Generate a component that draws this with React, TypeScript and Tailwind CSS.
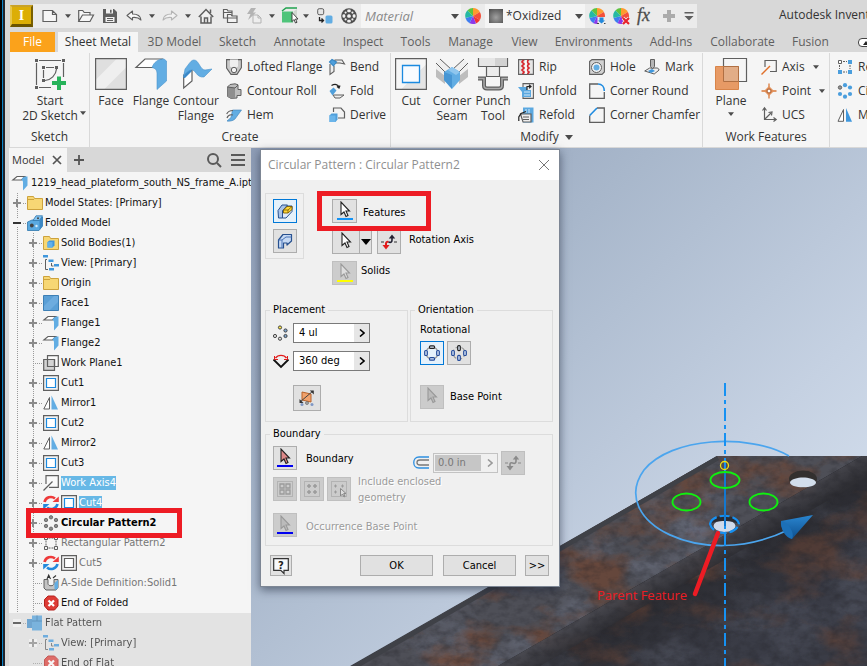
import React from "react";

const G = "#5f5f5f";
const B = "#62ade3";

const wheelSlices = (
  <g>
    <path d="M8 8V0a8 8 0 0 1 6.900 4z" fill="#ff9a2e" />
    <path d="M8 8 14.900 4a8 8 0 0 1 0 8z" fill="#f4503a" />
    <path d="m8 8 6.900 4A8 8 0 0 1 11 15.400z" fill="#f5322f" />
    <path d="m8 8 3 7.400a8 8 0 0 1-6.500-.2z" fill="#8a39ea" />
    <path d="m8 8-3.500 7.200A8 8 0 0 1 .5 10z" fill="#3e7df0" />
    <path d="M8 8 .5 10A8 8 0 0 1 2.500 2.300z" fill="#25b9a4" />
    <path d="M8 8 2.500 2.300A8 8 0 0 1 8 0z" fill="#5dc33f" />
  </g>
);

/* 16 x 16 drawings */
const small: Record<string, React.ReactNode> = {
  newFile: <path d="M1 2.500h9.500l4 4v7H1z M10.500 2.500v4h4" fill="#f6f6f6" stroke={G} strokeWidth="1.200" />,
  open: <path d="M.7 13.500V2.500h4l1.500 2H12V7M.7 13.500 4.500 7H15.500L12 13.500z" fill="#f6f6f6" stroke={G} strokeWidth="1.200" />,
  save: (
    <g>
      <path d="M1 1h11l3 3v11H1z" fill={G} />
      <path d="M4 1h7v4.500H4z" fill="#f0f0f0" />
      <path d="M8 1.800h1.600v3H8z" fill={G} />
      <path d="M3.500 9h9v5h-9z" fill="#f0f0f0" />
      <path d="M5 10.500h6M5 12.500h6" stroke={G} />
    </g>
  ),
  undo: <path d="M6.500 3 1 7.500 6.500 12V9.500C10 9 12.500 9.500 15 12c-.5-4-4-6-8.500-6z" fill="#fafafa" stroke={G} strokeWidth="1.100" strokeLinejoin="round" />,
  redo: <path d="M9.500 3 15 7.500 9.500 12V9.500C6 9 3.500 9.500 1 12c.5-4 4-6 8.500-6z" fill="#f2f2f2" stroke="#b5b5b5" strokeWidth="1.100" strokeLinejoin="round" />,
  home: (
    <g fill="none" stroke={G} strokeWidth="1.500">
      <path d="M.8 9 8 1.500 15.200 9M12.500 5V1.500M3 8.500V15h10V8.500" fill="#f2f2f2" />
      <path d="M6.500 15v-5h3v5" />
    </g>
  ),
  folders: (
    <g fill="#f2f2f2" stroke={G} strokeWidth="1.200">
      <path d="M1.500 1.500h3.500l1 1.500h4v7H1.500z" />
      <path d="M5.500 6.500h3.500l1 1.500h5v6.500H5.500z" />
      <path d="M1.500 4.500H10M5.500 10H15" />
    </g>
  ),
  bolt: (
    <g>
      <path d="M5 0h5L7 4.500h3L2 12l2.500-6H1z" fill="#b3b3b3" />
      <path d="M7 7h5l3 3v5H7z M12 7v3h3" fill="#eee" stroke="#b3b3b3" />
    </g>
  ),
  selectCube: (
    <g>
      <path d="M0 3.500h11v11H0z" fill="#4fc47a" />
      <path d="M0 3 4 0h11" stroke="#21a34f" strokeWidth="1.500" fill="none" />
      <path d="M11.500 3.500 15 1v10l-3.500 3z" fill="#cfd6cf" />
      <path d="M10 4.500v9l2-2 1.500 3.500 1.500-.7-1.500-3.300H16z" fill="#fff" stroke="#333" strokeWidth=".9" />
    </g>
  ),
  swap: (
    <g>
      <rect x=".7" y=".7" width="6" height="6" rx="1.500" fill="#e6e6e6" stroke={G} />
      <rect x="8.500" y="7.500" width="7" height="8" rx="1.500" fill={B} />
      <path d="M2.500 9v3.500H6M4.500 10.500l2 2-2 2" fill="none" stroke="#222" strokeWidth="1.300" />
    </g>
  ),
  ball: (
    <g>
      <circle cx="8" cy="8" r="7.800" fill="#4e4e4e" />
      <g fill="#f1f1f1">
        <rect x="6.200" y="6.200" width="3.600" height="3.600" rx="1.500" />
        <rect x="1.500" y="6.200" width="2.800" height="3.600" rx="1.200" />
        <rect x="11.700" y="6.200" width="2.800" height="3.600" rx="1.200" />
        <rect x="6.200" y="1.500" width="3.600" height="2.800" rx="1.200" />
        <rect x="6.200" y="11.700" width="3.600" height="2.800" rx="1.200" />
        <circle cx="4.600" cy="4.600" r="1.100" />
        <circle cx="11.400" cy="4.600" r="1.100" />
        <circle cx="4.600" cy="11.400" r="1.100" />
        <circle cx="11.400" cy="11.400" r="1.100" />
      </g>
    </g>
  ),
  wheel: wheelSlices,
  wheelAdjust: (
    <g>
      {wheelSlices}
      <path d="M8.500 9H16v7H8.500z" fill="#ebebeb" />
      <path d="M10.500 9.500h4v3H16l-3.500 3-3.500-3h1.500z" fill="#2389dc" />
      <path d="M8 15.500h2M15 15.500h1.500" stroke="#444" />
    </g>
  ),
  wheelClear: (
    <g>
      {wheelSlices}
      <path d="m10 10 6 6M16 10l-6 6" stroke="#f3f3f3" strokeWidth="3.600" />
      <path d="m10 10 6 6M16 10l-6 6" stroke="#e8232b" strokeWidth="2.200" />
    </g>
  ),
  fx: (
    <text x="0" y="13" fontFamily="'Liberation Serif', serif" fontStyle="italic" fontSize="18" fill="#4c4c4c" stroke="#4c4c4c" strokeWidth=".3">
      fx
    </text>
  ),
  plusGray: <path d="M6 2h4v4h4v4h-4v4H6v-4H2V6h4z" fill="#ababab" />,
  more: <path d="M3.500 4h9v1.500h-9zM3.500 8h9L8 12.500z" fill={G} />,
  lofted: (
    <g>
      <path d="M.6.600h14.800v8L11 15.400H5L.6 9z" fill="#c9c9c9" stroke={G} strokeWidth="1.100" />
      <path d="M4 .6v7l4 2 4-2v-7z" fill="#efefef" />
      <circle cx="8" cy="11" r="2.700" fill="#f3f3f3" stroke={G} />
    </g>
  ),
  roll: (
    <g>
      <path d="M1.500 4 4 1.500 9 .8l3 1v4.700h3v6H11V15l-6 .4-3.500-2z" fill="#bdbdbd" stroke={G} />
      <path d="M1.500 4 9 5v10l-4 .4-3.500-2z" fill="#8f8f8f" />
      <path d="M1.500 4 9 5l3-3" fill="none" stroke={G} />
    </g>
  ),
  hem: (
    <g>
      <path d="M6.500 3h9L9 12c-2 2-6 2.500-8 2l4-3.500z" fill={B} stroke="#3f82b8" strokeWidth=".6" />
      <path d="M.7 7C2 4 5 3.500 7 3.500M1 11c1-3 4-3.500 6-3" fill="none" stroke={G} strokeWidth="1.200" />
    </g>
  ),
  bend: (
    <g fill="none" stroke={G} strokeWidth="1.100">
      <path d="M6 1h7l2.500 4L11 4H5z" fill="#eee" />
      <path d="M1 5v10.500l4-3V7" fill="#eee" />
      <path d="M.5 3 3 .5 7.500 3 4.500 7z" fill="#4f9fdb" stroke="#3988c4" />
    </g>
  ),
  fold: (
    <g>
      <path d="M4 12h11l-4 3H6z" fill="#eee" stroke={G} />
      <path d="m.5 8 4-3.500 3 3-4 5z" fill="#4f9fdb" />
      <path d="M2.500 2.500C6 .5 9 1.500 10 4M8 3.500l2 1.500 1-2.500" fill="none" stroke="#222" strokeWidth="1.200" />
    </g>
  ),
  derive: (
    <g>
      <path d="M4.500 5V1h7.500l3.500 4v6H9" fill="#f3f3f3" stroke={G} strokeWidth="1.200" />
      <path d="m.5 8.500 2-2h6v6l-2 2.500h-6z" fill="#4f9fdb" />
      <path d="M.5 8.500h6v6.500h-6z" fill="#6bb5ea" />
    </g>
  ),
  rip: (
    <g>
      <path d="M.6.600h14.800v14.800H.6z" fill="#e6e6e6" stroke={G} strokeWidth="1.100" />
      <path d="M5.500 1 4 3l2 2-2 2 2 2-2 2 2 2-1.500 2M10.500 1 9 3l2 2-2 2 2 2-2 2 2 2-1.500 2" fill="none" stroke="#d8242b" strokeWidth="1.700" />
      <path d="M7.200 1h1.600v14H7.200z" fill="#fff" />
    </g>
  ),
  unfold: (
    <g>
      <path d="M5 .600h10.400v14.800H5z" fill="#eee" stroke={G} strokeWidth="1.100" />
      <path d="M0 4h9v3h4v7H4V9z" fill="#5ba8e0" />
      <path d="M6 9h6M6 12h6" stroke="#d4e9f8" />
      <path d="M9 7V3.500h3.500M11 1.800l2 1.700-2 1.700" fill="none" stroke="#222" strokeWidth="1.200" />
    </g>
  ),
  refold: (
    <g>
      <path d="M5 .5h10.500v15H5z" fill="#5ba8e0" />
      <path d="M7 3h6M7 5h6" stroke="#d4e9f8" strokeDasharray="2 1" />
      <path d="M2.500 7H13v8H5z" fill="#eee" stroke={G} strokeWidth="1.200" />
      <path d="M5 10h6M5 12.500h6" stroke={G} />
      <path d="M8 4.500 3 6.500.8 10v4" fill="none" stroke="#222" strokeWidth="1.200" />
    </g>
  ),
  hole: (
    <g>
      <path d="M.6 2.500 3 .6h12.400V13L13 15.400H.6z" fill="#d2d2d2" stroke={G} strokeWidth="1.100" />
      <circle cx="7.500" cy="8.500" r="5" fill="#f5f5f5" stroke={G} />
      <circle cx="7.500" cy="8.500" r="3" fill="#63ade2" />
    </g>
  ),
  cornerRound: (
    <g fill="none" strokeWidth="1.300">
      <path d="M9 1H.7v14.300h14.600V9" stroke={G} />
      <path d="M9 1c4 0 6.300 3 6.300 7" stroke="#1e8be0" strokeWidth="1.600" />
    </g>
  ),
  chamfer: (
    <g fill="none" strokeWidth="1.300">
      <path d="M8 1h7.300v14.300H.7V8.500" stroke={G} />
      <path d="M.7 8.500 8 1" stroke="#1e8be0" strokeWidth="1.600" />
    </g>
  ),
  mark: (
    <g>
      <path d="m.7 12 5-3h8l1.500 2-5 4z" fill="#eee" stroke={G} />
      <path d="m4 12 4-2 3 2-4 2z" fill="#3f97dd" />
      <path d="M6.500.5h4v7L8.500 10l-2-2.500z" fill="#b5b5b5" stroke={G} />
    </g>
  ),
  axis: (
    <g fill="none">
      <path d="M4 8V1.500h11.300v11H9" stroke={G} strokeWidth="1.200" />
      <path d="M.5 15.500 9 7" stroke="#e0702a" strokeWidth="1.400" />
    </g>
  ),
  point: (
    <g>
      <path d="M8 .5v15M.5 8h15" stroke="#d9793a" strokeWidth="1.300" />
      <path d="m8 3 5 5-5 5-5-5z" fill="#e2925c" />
      <circle cx="8" cy="8" r="2" fill="#fff" stroke="#a8582a" />
    </g>
  ),
  ucs: (
    <g fill="none" stroke={G} strokeWidth="1.200">
      <path d="M3.500 1v11.500H15M3.500 12.500 10 6" />
      <path d="M1.500 3.500 3.500.8l2 2.700M12.500 10.500l2.700 2-2.700 2M7.500 5.500l3.500-.5-.5 3.500" />
    </g>
  ),
  rectPattern: (
    <g>
      <path d="M6 2.500h4M2.500 6v4M6 13h4M13 6v4" stroke={G} strokeDasharray="2 1" />
      <path d="M1.500 1.500h3v3h-3z" fill="#fff" stroke={G} />
      <path d="M11 1h4v4h-4zM1 11h4v4H1zM11 11h4v4h-4z" fill="#4a9edd" />
    </g>
  ),
  circPattern: (
    <g fill="#4a9edd">
      <circle cx="3" cy="4.500" r="1.700" fill="#999" stroke={G} />
      <circle cx="8" cy="2.200" r="2.100" />
      <circle cx="13" cy="4.500" r="2.100" />
      <circle cx="13" cy="11" r="2.100" />
      <circle cx="8" cy="13.700" r="2.100" />
      <circle cx="3" cy="11" r="2.100" />
    </g>
  ),
  mirrorBlue: (
    <g>
      <path d="M6.500 2.500v11.800H1z" fill="#fff" stroke={G} />
      <path d="M9 1v13.800h6z" fill="#3f97dd" />
    </g>
  ),
  /* browser tree */
  part: (
    <g>
      <path d="M5 1.500h8L9.500 5H.8z" fill="#fff" stroke={G} strokeWidth="1.100" />
      <path d="M9.500 5C10 2.500 12 1 15.500 1.500v9L11 15.500V7.500C11 6 10.500 5.500 9.500 5z" fill={B} />
    </g>
  ),
  folder: (
    <g>
      <path d="M.5 14.500v-13h6l1 2h8v11z" fill="#f7d774" stroke="#cda23c" />
      <path d="M1 4.500h6" stroke="#cda23c" />
    </g>
  ),
  folded: (
    <g>
      <path d="M.5 7 5 5h7.500l3-3v9L12 15.500H.5z" fill="#5aa9e0" stroke="#2f77ad" strokeWidth=".8" />
      <path d="M6 5.500 9 .8h6.500L12.500 5.500z" fill="#84c3ef" stroke="#2f77ad" strokeWidth=".8" />
      <path d="M12.500 5.500V15l3-4V1z" fill="#3b87c4" />
      <circle cx="4.800" cy="10.500" r="1.900" fill="#444" />
      <circle cx="11" cy="3.200" r="1" fill="#444" />
      <circle cx="9.500" cy="11" r="1.200" fill="#d8ecfa" />
    </g>
  ),
  bodies: (
    <g>
      <path d="M.5 14.500v-13h6l1 2h8v11z" fill="#f7d774" stroke="#cda23c" />
      <path d="m4.500 7 2-1.500h5v5l-2 2h-5z" fill="#3f97dd" />
      <path d="M4.500 7h5v5.500h-5z" fill="#63b1ea" />
    </g>
  ),
  view: (
    <g>
      <path d="M0 0h5v2.500H0zM5.500 4.500h5V7h-5zM11 9h5v2.500h-5zM6 13h5v2.500H6z" fill="#3f97dd" />
      <path d="M4 4.500H2.500v10H5M8.500 8v3h2" fill="none" stroke={G} />
    </g>
  ),
  face: (
    <g>
      <path d="M.5.500h15v15H.5z" fill="#5a9fd6" stroke="#3d7fb5" />
      <path d="M11 1h4v6L7 15H1v-4z" fill="#79b6e4" opacity=".6" />
    </g>
  ),
  workPlane: (
    <g fill="none" stroke={G} strokeWidth="1.200">
      <path d="M4.500.700h10.800v10.800H4.500z" fill="#fafafa" />
      <path d="M.7 4.500h10.800v10.800H.7z" fill="#cfcfcf" fillOpacity=".9" />
      <path d="M4.500 4.500h7v7h-7z" />
    </g>
  ),
  cut: (
    <g>
      <path d="M.6.600h14.800v14.800H.6z" fill="#f3f3f3" stroke={G} strokeWidth="1.200" />
      <path d="M3.500 3.500h9v9h-9z" fill="#fff" stroke="#1b8ae0" strokeWidth="1.200" />
    </g>
  ),
  cutGray: (
    <g>
      <path d="M.6.600h14.800v14.800H.6z" fill="#f3f3f3" stroke={G} strokeWidth="1.200" />
      <path d="M3.500 3.500h9v9h-9z" fill="#fff" stroke={G} strokeWidth="1.200" />
    </g>
  ),
  mirror: (
    <g>
      <path d="M6.500 2.500V14H.8z" fill="#fff" stroke={G} />
      <path d="M8.500.500V14.500H15z" fill={B} />
    </g>
  ),
  workAxis: (
    <g fill="none" stroke={G} strokeWidth="1.200">
      <path d="M3 9V.7h12.300v11.600H6" fill="#fafafa" />
      <path d="M.5 15.500 9.500 6.500" />
    </g>
  ),
  refresh: (
    <g fill="none" strokeWidth="2.600">
      <path d="M1.500 7a6.500 6.500 0 0 1 10.500-3.500" stroke="#ee3a3a" />
      <path d="M14.500 9A6.500 6.500 0 0 1 4 12.500" stroke="#2389dc" />
      <path d="M15.800 1.500V7H9.500z" fill="#ee3a3a" />
      <path d="M.2 14.500V9H6.500z" fill="#2389dc" />
    </g>
  ),
  circGray: (
    <g fill="#8a8a8a" stroke={G} strokeWidth=".8">
      <circle cx="8" cy="2.300" r="1.700" />
      <circle cx="13" cy="5" r="1.700" />
      <circle cx="13" cy="11" r="1.700" />
      <circle cx="8" cy="13.700" r="1.700" />
      <circle cx="3" cy="11" r="1.700" />
      <circle cx="3" cy="5" r="1.700" />
    </g>
  ),
  rectGray: (
    <g fill="none" stroke={G}>
      <path d="M5.500 3h5M3 5.500v5M5.500 13h5M13 5.500v5" strokeDasharray="2 1" />
      <path d="M1.500 1.500h3v3h-3zM11.500 1.500h3v3h-3zM1.500 11.500h3v3h-3zM11.500 11.500h3v3h-3z" />
    </g>
  ),
  aSide: (
    <g>
      <path d="M1 4.500h4v4c0 3 6 3 6 0v-4h4v8L13 15H3l-2-2z" fill="#c3c3c3" stroke={G} />
      <path d="M11.500 13.500V8L15 5v8l-2 2z" fill={B} />
      <path d="m4 4 1.700-4L7.500 4M4.600 2.500h2.200M10 3l3-2.500" fill="none" stroke="#333" strokeWidth="1.100" />
    </g>
  ),
  end: (
    <g>
      <path d="M5 1h6.500L15 4.500V11l-3.500 4H5L1.500 11V4.500z" fill="#dd3b35" stroke="#b5211c" />
      <path d="m5.500 5.500 5.500 5.500M11 5.500 5.500 11" stroke="#fff" strokeWidth="2.200" />
    </g>
  ),
  flat: (
    <g>
      <path d="M5 .5h10v15H5z" fill="#4f9fdb" />
      <path d="M0 4h5v9H0z" fill="#3f8cc8" />
      <path d="M5 6h10M10 .5V6" stroke="#2a74ad" />
    </g>
  ),
  /* dialog */
  featOn: (
    <g strokeLinejoin="round">
      <path d="M1 7.500 5 2h5.500l-5 6v7H1.500z" fill="#a9c4ea" stroke="#27508f" />
      <path d="M5.500 8 10 3h5v5.500L9 15H5.500z" fill="#dfeafa" stroke="#27508f" />
      <path d="m6.500 7 3.500-3.500h5v3L11 10H6.500z" fill="#ffd83a" stroke="#7a5c00" strokeWidth=".9" />
      <path d="M6.500 7H11l4-3.500M11 7v3" fill="none" stroke="#7a5c00" strokeWidth=".8" />
    </g>
  ),
  solidBlue: (
    <g strokeLinejoin="round">
      <path d="M1.500 7 6 1.500h8.500V8L10 12v-2H6.500v5h-5z" fill="#c6d9f3" stroke="#27508f" strokeWidth="1.200" />
      <path d="M1.500 7H5l4-3h5.500M5 7v8" fill="none" stroke="#4a74b8" />
    </g>
  ),
  flip: (
    <g fill="none" strokeWidth="1.200">
      <path d="M0 8h3M13 8h3" stroke="#333" />
      <path d="M5 12V9.500C5 8 6 7.500 7.500 8" stroke="#e21b1b" strokeWidth="2" />
      <path d="M1.500 11h7L5 15.500z" fill="#e21b1b" />
      <path d="M7.500 8C10 9 11 8 11 6V4" stroke="#223" strokeWidth="1.600" />
      <path d="M7.800 4.500h6.400L11 .5z" fill="#223" />
    </g>
  ),
  flipGray: (
    <g fill="none" strokeWidth="1.200">
      <path d="M0 8h3M13 8h3" stroke="#888" />
      <path d="M5 12V9.500C5 8 6 7.500 7.500 8 10 9 11 8 11 6V4" stroke="#8a8a8a" strokeWidth="1.600" />
      <path d="M1.500 11h7L5 15.500zM7.800 4.500h6.400L11 .5z" fill="#8a8a8a" />
    </g>
  ),
  count: (
    <g stroke="#333" strokeWidth=".9">
      <circle cx="7" cy="2.500" r="1.600" fill="#ffe94a" />
      <circle cx="12.500" cy="5.500" r="1.600" fill="#7fa5cc" />
      <circle cx="12.500" cy="11" r="1.600" fill="#7fa5cc" />
      <circle cx="7" cy="13.700" r="1.600" fill="#ddd" />
      <circle cx="2" cy="11" r="1.600" fill="#ddd" />
    </g>
  ),
  angle: (
    <g fill="none">
      <path d="M.5 6.500 8 14l7.500-7.500" stroke="#111" strokeWidth="1.800" />
      <path d="M2.500 5C5 1.500 11 1.500 13.500 5" stroke="#e21b1b" strokeWidth="1.400" />
      <path d="M1.500 3v3.500H5M14.500 3v3.500H11" stroke="#e21b1b" />
    </g>
  ),
  mid: (
    <g>
      <path d="m3 2 9 2v8l-9-2z" fill="#f2a26c" stroke="#b8632b" />
      <path d="M1 12 14 1" stroke="#444" />
      <path d="M14.800.500v4l-4-4zM.5 9v4h4z" fill="#333" />
      <circle cx="3" cy="14.500" r="1.500" fill="#7f97c4" />
      <circle cx="8" cy="13" r="1.500" fill="#aaa" stroke="#555" strokeWidth=".6" />
      <circle cx="13" cy="14.500" r="1.500" fill="#7f97c4" />
    </g>
  ),
  rotA: (
    <g fill="none" strokeWidth="1.200">
      <circle cx="8" cy="8" r="6" stroke="#999" />
      <g fill="#dbe7f7" stroke="#234a9a">
        <rect x="5.500" y=".8" width="5" height="2.600" rx="1" stroke="#222" />
        <rect x="5.500" y="12.600" width="5" height="2.600" rx="1" />
        <rect x=".7" y="5.500" width="2.600" height="5" rx="1" />
        <rect x="12.700" y="5.500" width="2.600" height="5" rx="1" />
      </g>
    </g>
  ),
  rotB: (
    <g fill="none" strokeWidth="1.200">
      <circle cx="8" cy="8" r="6" stroke="#999" strokeDasharray="4 2" />
      <g fill="#dbe7f7" stroke="#234a9a">
        <rect x="6.700" y=".6" width="2.600" height="5" rx="1" stroke="#222" />
        <rect x="6.700" y="10.400" width="2.600" height="5" rx="1" />
        <rect x=".7" y="5.500" width="2.600" height="5" rx="1" />
        <rect x="12.700" y="5.500" width="2.600" height="5" rx="1" />
      </g>
    </g>
  ),
  offset: (
    <g fill="none" strokeWidth="1.300">
      <path d="M16 2H6C-1 2-1 13 6 13h10" stroke="#2d8fe0" />
      <path d="M16 5H7C3 5 3 10 7 10h9" stroke="#777" />
    </g>
  ),
  inc1: (
    <g fill="none" stroke="#9b9b9b">
      <path d="M.5.500h15v15H.5z" strokeDasharray="1 1" />
      <path d="M3 3h4v4H3zM9 3h4v4H9zM3 9h4v4H3zM9 9h4v4H9z" strokeWidth="1.300" />
    </g>
  ),
  inc2: (
    <g fill="none" stroke="#9b9b9b">
      <path d="M.5.500h15v15H.5z" strokeDasharray="1 1" />
      <path d="M3 5h4M9 5h4M3 11h4M9 11h4M5 3v4M11 3v4M5 9v4M11 9v4" strokeWidth="1.500" />
    </g>
  ),
  inc3: (
    <g fill="none" stroke="#9b9b9b">
      <path d="M.5.500h15v15H.5z" strokeDasharray="1 1" />
      <path d="M3 5h3M10 5h3M3 11h3M4.500 3.500v3M11.500 3.500v3M4.500 9.500v3" />
      <path d="M9.500 7.500V15l2-2 1.500 3 1-.6-1.300-2.900H15z" fill="#ddd" stroke="#888" />
    </g>
  ),
  help: (
    <g>
      <path d="M.7.700h14.600v11.600H11V15.500L7.800 12.300H.7z" fill="#f7f9fb" stroke="#333" strokeWidth="1.200" />
      <text x="5" y="10.500" fontFamily="'DejaVu Sans'" fontWeight="bold" fontSize="10" fill="#222">
        ?
      </text>
    </g>
  ),
};

/* 32 x 32 drawings */
const large: Record<string, React.ReactNode> = {
  sketch: (
    <g fill="none" stroke={G} strokeWidth="1.200">
      <path d="M2.500 5v22M5 2.500h22M29.500 5v14M5 29.500h12M9.500 12v8M12 9.500h8M11 22.500C17 22 22 17 22.500 11" />
      <g fill={G} stroke="none">
        <path d="M1 1h3v3H1zM28 1h3v3h-3zM1 28h3v3H1zM8 8h3v3H8zM21 8h3v3h-3zM8 21h3v3H8z" />
      </g>
      <path d="M23 18.500h4V23h5v4h-5v5h-4v-5h-5v-4h5z" fill="#27b35a" stroke="none" />
    </g>
  ),
  face: (
    <g>
      <path d="M.5.500h31v31H.5z" fill="#dfdfdf" />
      <path d="M22 .5h9.500V9L9 31.500H.5V22z" fill="#efefef" />
      <path d="M.6.600h30.800v30.800H.6z" fill="none" stroke={G} strokeWidth="1.200" />
    </g>
  ),
  flange: (
    <g>
      <path d="M10 1h17l-9 8.500H1z" fill="#fff" stroke={G} strokeWidth="1.200" />
      <path d="M17 9.500C19 4 23 1 29 1l2.500 2v20L22 31.500V15c0-3-2-5-5-5.500z" fill={B} stroke="#4a94cc" strokeWidth=".6" />
    </g>
  ),
  contourFlange: (
    <g>
      <path d="M3.700 30V17L12 12v11z" fill="#fff" stroke={G} strokeWidth="1.200" />
      <path d="M3.500 20C3.500 13 8 8 12 13L5 20z" fill="#3b89c9" />
      <path d="M5 11C9 6 11 2 14 2c5 0 6 10 11 10l7-1-8 8c-8 1-8-8-13-7-2 .5-6 3-7.500 7z" fill={B} stroke="#4a94cc" strokeWidth=".6" />
    </g>
  ),
  cut: (
    <g>
      <path d="M.5.500h31v31H.5z" fill="#f6f6f6" />
      <path d="M31.500 6v25.500H6z" fill="#e4e4e4" />
      <path d="M.6.600h30.800v30.800H.6z" fill="none" stroke={G} strokeWidth="1.200" />
      <path d="M7.500 7.500h17v17h-17z" fill="#f8fbff" stroke="#1b8ae0" strokeWidth="1.300" />
    </g>
  ),
  seam: (
    <g>
      <path d="M0 10 9 17v9L0 19zM32 10l-9 7v9l9-7z" fill="#bdbdbd" />
      <path d="M0 5v6l9 7 7-7L4 1zM32 5v6l-9 7-7-7L28 1z" fill="#efefef" />
      <path d="M4 1 16 12 28 1M0 5l9 9M32 5l-9 9" fill="none" stroke={G} />
      <path d="m16 9 8 5v8l-8 9-8-9v-8z" fill={B} />
      <path d="m16 9 8 5-4 3-8-5z" fill="#8fc6ee" />
      <path d="M8 14v8l8 9V17z" fill="#4796d4" />
    </g>
  ),
  punch: (
    <g>
      <path d="M1.500 0v8.500h29V0" fill="#e6e6e6" stroke={G} strokeWidth="1.200" />
      <path d="M18 0h12v8H18z" fill="#d2d2d2" />
      <path d="M9.500 8.500h13v10h-13z" fill="#ececec" stroke={G} strokeWidth="1.200" />
      <path d="M1 20.500h6v7c0 2 1 3 3 3h12c2 0 3-1 3-3v-7h6" fill="none" stroke={G} strokeWidth="4" />
      <path d="M1 20.500h6v7c0 2 1 3 3 3h12c2 0 3-1 3-3v-7h6" fill="none" stroke="#aaa" strokeWidth="1.500" />
    </g>
  ),
  plane: (
    <g>
      <path d="M8.500.500h23v23h-23z" fill="#f5f5f5" stroke={G} strokeWidth="1.200" />
      <path d="M.5 8.500h23v23H.5z" fill="#e79a65" stroke="#d88449" />
      <path d="M8.500 8.500h15v15h-15z" fill="#e2ad87" stroke="#b06f42" />
    </g>
  ),
};

function Icon({ name, className = "" }: { name: string; className?: string }) {
  return (
    <svg viewBox="0 0 16 16" aria-hidden="true" className={`size-4 shrink-0 overflow-visible ${className}`}>
      {small[name]}
    </svg>
  );
}

function Caret({ className = "h-[4px] w-[6px]" }: { className?: string }) {
  return (
    <svg viewBox="0 0 8 5" aria-hidden="true" className={`shrink-0 ${className}`}>
      <path d="M0 0h8L4 5z" fill="#4c4c4c" />
    </svg>
  );
}

function QatButton({ icon, label, narrow }: { icon: string; label: string; narrow?: boolean }) {
  return (
    <button aria-label={label} className={`flex h-6 items-center justify-center ${narrow ? "w-4" : "w-6"}`}>
      <Icon name={icon} />
    </button>
  );
}

function QatCaret({ label, narrow }: { label: string; narrow?: boolean }) {
  return (
    <button aria-label={label} className={`flex h-6 items-center justify-center ${narrow ? "w-2" : "w-3"}`}>
      <Caret className="h-[4px] w-[6px]" />
    </button>
  );
}

function QatCombo({ label, value, className, swatch }: { label: string; value: string; className: string; swatch?: boolean }) {
  return (
    <div className="relative flex h-6 w-[100px] items-center bg-[#f5f5f5]">
      <select aria-label={label} className={`h-full w-full appearance-none bg-transparent outline-none ${className}`}>
        <option>{value}</option>
      </select>
      {swatch && (
        <span className="pointer-events-none absolute left-1 size-[14px] bg-[radial-gradient(circle_at_50%_60%,#a0a0a0,#4a4a4a)]" />
      )}
      <Caret className="pointer-events-none absolute right-[2px] h-[5px] w-[8px]" />
    </div>
  );
}

function QuickAccess() {
  return (
    <header className="flex h-8 shrink-0 items-center overflow-hidden pl-[5px]">
      <div className="flex h-[22px] w-[23px] shrink-0 items-center justify-center border-t-2 border-r-2 border-b-3 border-l-2 border-t-[#c9a227] border-r-[#7a6000] border-b-[#6b5400] border-l-[#e8c64a] bg-[#dcae06] font-['Liberation_Serif',serif] text-[14px] font-bold text-white">
        I
      </div>
      <div className="flex h-6 shrink-0 items-center bg-[#ebebeb] pl-[5px]">
        <QatButton icon="newFile" label="New" />
        <QatCaret label="New options" />
        <QatButton icon="open" label="Open" />
        <QatButton icon="save" label="Save" />
        <QatButton icon="undo" label="Undo" />
        <QatCaret label="Undo history" />
        <QatButton icon="redo" label="Redo" />
        <QatCaret label="Redo history" />
        <QatButton icon="home" label="Home" />
        <QatButton icon="folders" label="Projects" />
        <QatButton icon="bolt" label="Update" />
        <QatCaret label="Update options" />
        <QatButton icon="selectCube" label="Select" />
        <QatCaret label="Select options" narrow />
        <div className="flex pl-[3px]">
          <QatButton icon="swap" label="Replace" />
          <QatButton icon="ball" label="Appearance browser" />
        </div>
        <QatCombo label="Material" value="Material" className="pl-1 text-[13px] text-[#8a8a8a] italic" />
        <QatButton icon="wheel" label="Appearance" />
        <QatCombo label="Appearance" value="*Oxidized" className="pl-[21px] text-[#333]" swatch />
        <QatButton icon="wheelAdjust" label="Adjust appearance" />
        <QatButton icon="wheelClear" label="Clear appearance" />
        <QatButton icon="fx" label="Parameters" />
        <QatButton icon="plusGray" label="Add" />
        <QatButton icon="more" label="Customize" narrow />
      </div>
      <div className="min-w-0 flex-1 overflow-hidden pb-0.5 pl-[82px] whitespace-nowrap text-[#333]">Autodesk Inventor</div>
    </header>
  );
}

const tabs: [string, string][] = [
  ["3D Model", "w-[71px]"],
  ["Sketch", "w-[55px]"],
  ["Annotate", "w-[69px]"],
  ["Inspect", "w-[58px]"],
  ["Tools", "w-[47px]"],
  ["Manage", "w-[63px]"],
  ["View", "w-[45px]"],
  ["Environments", "w-[93px]"],
  ["Add-Ins", "w-[62px]"],
  ["Collaborate", "w-[81px]"],
  ["Fusion", "w-[55px]"],
];

function Tabs() {
  return (
    <nav className="flex h-5 shrink-0 overflow-hidden pl-[5px] whitespace-nowrap text-[#5f5f5f]">
      <button className="w-[45px] shrink-0 bg-[#fba21b] text-white">File</button>
      <button className="mr-px ml-[3px] w-20 shrink-0 bg-[#f5f5f5] text-[#333]">Sheet Metal</button>
      {tabs.map(([name, w]) => (
        <button key={name} className={`flex shrink-0 items-center justify-center ${w}`}>
          {name}
        </button>
      ))}
      <button aria-label="Minimize ribbon" className="mt-1.5 ml-5 flex h-[9px] w-5 shrink-0 items-center rounded border border-[#444] bg-white pl-1">
        <svg viewBox="0 0 6 4" className="h-1 w-1.5">
          <path d="M0 4h6L3 0z" fill="#222" />
        </svg>
      </button>
    </nav>
  );
}

function Big({ icon, lines, className, caret }: { icon: string; lines: string[]; className: string; caret?: "side" | "below" }) {
  return (
    <button className={`relative flex shrink-0 flex-col items-center whitespace-nowrap ${className}`}>
      <svg viewBox="0 0 32 32" aria-hidden="true" className="mb-[3px] size-8 overflow-visible">
        {large[icon]}
      </svg>
      {lines.map((l) => (
        <span key={l} className="leading-[15px]">
          {l}
        </span>
      ))}
      {caret === "side" && <Caret className="absolute right-0 bottom-2 h-[4px] w-[6px]" />}
      {caret === "below" && <Caret className="mt-1 h-[4px] w-[6px]" />}
    </button>
  );
}

function Small({ icon, label, caret }: { icon: string; label: string; caret?: boolean }) {
  return (
    <button className="flex h-6 items-center gap-[5px] whitespace-nowrap">
      <Icon name={icon} />
      <span>{label}</span>
      {caret && <Caret className="ml-[3px] h-[4px] w-[6px]" />}
    </button>
  );
}

function Group({ title, className, children, caret }: { title: string; className: string; children: React.ReactNode; caret?: boolean }) {
  return (
    <section className={`flex shrink-0 flex-col border-r border-[#d9d9d9] ${className}`}>
      <div className="flex h-[75px] items-start pt-[5px]">{children}</div>
      <h2 className="flex h-[18px] items-center justify-center gap-1.5">
        {title}
        {caret && <Caret className="h-[5px] w-[8px]" />}
      </h2>
    </section>
  );
}

function Col({ className = "", children }: { className?: string; children: React.ReactNode }) {
  return <div className={`-mt-[3px] flex shrink-0 flex-col ${className}`}>{children}</div>;
}

function Ribbon() {
  return (
    <div className="ml-[5px] flex h-[95px] shrink-0 overflow-hidden bg-[#f5f5f5] pt-px text-[#333]">
      <Group title="Sketch" className="w-20">
        <Big icon="sketch" lines={["Start", "2D Sketch"]} className="w-[76px] pl-1" caret="side" />
      </Group>
      <Group title="Create" className="w-[301px]">
        <Big icon="face" lines={["Face"]} className="ml-[1px] w-10" />
        <Big icon="flange" lines={["Flange"]} className="w-10" />
        <Big icon="contourFlange" lines={["Contour", "Flange"]} className="w-[50px]" />
        <Col className="ml-[5px] w-[103px]">
          <Small icon="lofted" label="Lofted Flange" />
          <Small icon="roll" label="Contour Roll" />
          <Small icon="hem" label="Hem" />
        </Col>
        <Col>
          <Small icon="bend" label="Bend" />
          <Small icon="fold" label="Fold" />
          <Small icon="derive" label="Derive" />
        </Col>
      </Group>
      <Group title="Modify" className="w-[312px]" caret>
        <Big icon="cut" lines={["Cut"]} className="w-10" />
        <Big icon="seam" lines={["Corner", "Seam"]} className="w-[42px]" />
        <Big icon="punch" lines={["Punch", "Tool"]} className="w-10" />
        <Col className="ml-[5px] w-[71px]">
          <Small icon="rip" label="Rip" />
          <Small icon="unfold" label="Unfold" />
          <Small icon="refold" label="Refold" />
        </Col>
        <Col>
          <div className="flex">
            <div className="w-[55px]">
              <Small icon="hole" label="Hole" />
            </div>
            <Small icon="mark" label="Mark" />
          </div>
          <Small icon="cornerRound" label="Corner Round" />
          <Small icon="chamfer" label="Corner Chamfer" />
        </Col>
      </Group>
      <Group title="Work Features" className="w-[127px]">
        <Big icon="plane" lines={["Plane"]} className="ml-2 w-10" caret="below" />
        <Col className="ml-[10px]">
          <Small icon="axis" label="Axis" caret />
          <Small icon="point" label="Point" caret />
          <Small icon="ucs" label="UCS" />
        </Col>
      </Group>
      <Group title="" className="w-[200px]">
        <Col className="ml-[7px]">
          <Small icon="rectPattern" label="Rectangular" />
          <Small icon="circPattern" label="Circular" />
          <Small icon="mirrorBlue" label="Mirror" />
        </Col>
      </Group>
    </div>
  );
}

type Node = { t: string; icons: string[]; s?: "sel" | "dim" | "bold"; leaf?: boolean };

const nodes: Node[] = [
  { t: "Solid Bodies(1)", icons: ["bodies"] },
  { t: "View: [Primary]", icons: ["view"] },
  { t: "Origin", icons: ["folder"] },
  { t: "Face1", icons: ["face"] },
  { t: "Flange1", icons: ["part"] },
  { t: "Flange2", icons: ["part"] },
  { t: "Work Plane1", icons: ["workPlane"], leaf: true },
  { t: "Cut1", icons: ["cut"] },
  { t: "Mirror1", icons: ["mirror"] },
  { t: "Cut2", icons: ["cut"] },
  { t: "Mirror2", icons: ["mirror"] },
  { t: "Cut3", icons: ["cut"] },
  { t: "Work Axis4", icons: ["workAxis"], s: "sel" },
  { t: "Cut4", icons: ["refresh", "cut"], s: "sel" },
  { t: "Circular Pattern2", icons: ["circGray"], s: "bold" },
  { t: "Rectangular Pattern2", icons: ["rectGray"], s: "dim" },
  { t: "Cut5", icons: ["refresh", "cutGray"], s: "dim" },
  { t: "A-Side Definition:Solid1", icons: ["aSide"], s: "dim", leaf: true },
  { t: "End of Folded", icons: ["end"], leaf: true },
];

function Toggle({ kind }: { kind: "plus" | "minus" | "leaf" }) {
  return (
    <span className="flex w-[18px] shrink-0 items-center pl-1">
      {kind === "leaf" ? (
        <span className="ml-1 w-[9px] border-t border-dotted border-[#9a9a9a]" />
      ) : (
        <>
          <svg viewBox="0 0 8 8" aria-hidden="true" className="size-2 bg-[#f5f5f5]">
            {kind === "plus" ? <path d="M3 0h2v3h3v2H5v3H3V5H0V3h3z" fill="#8a8a8a" /> : <path d="M0 3h8v2H0z" fill="#333" />}
          </svg>
          <span className="ml-[2px] w-[3px] border-t border-dotted border-[#9a9a9a]" />
        </>
      )}
    </span>
  );
}

function Row({ node, kind }: { node: Node; kind?: "minus" }) {
  const tone =
    node.s === "sel" ? "bg-[#67b8e6] text-white" : node.s === "dim" ? "text-[#757575]" : node.s === "bold" ? "font-bold text-black" : "text-[#111]";
  return (
    <div className="flex h-5 items-center whitespace-nowrap">
      <Toggle kind={kind ?? (node.leaf ? "leaf" : "plus")} />
      <span className="flex gap-[2px]">
        {node.icons.map((i) => (
          <Icon key={i} name={i} />
        ))}
      </span>
      <span className={`ml-[2px] leading-[14px] ${tone}`}>{node.t}</span>
    </div>
  );
}

function Browser() {
  return (
    <aside className="ml-1 flex w-[242px] shrink-0 flex-col overflow-hidden bg-[#f5f5f5] font-['DejaVu_Sans_Condensed','Noto_Sans',sans-serif] text-[11px]">
      <div className="flex h-6 shrink-0 items-center bg-[#d8d8d8] text-[#333]">
        <button className="flex h-full w-[58px] items-center gap-2 bg-[#f5f5f5] pl-[3px]">
          <span className="font-['Open_Sans',sans-serif]">Model</span>
          <svg viewBox="0 0 10 10" className="size-[10px]" aria-hidden="true">
            <path d="m1 1 8 8M9 1 1 9" stroke="#555" strokeWidth="1.700" />
          </svg>
        </button>
        <button aria-label="Add panel" className="ml-[7px]">
          <svg viewBox="0 0 10 10" className="size-[10px]">
            <path d="M5 0v10M0 5h10" stroke="#555" strokeWidth="1.800" />
          </svg>
        </button>
        <button aria-label="Search" className="ml-auto">
          <svg viewBox="0 0 16 16" className="size-4">
            <circle cx="7" cy="7" r="5" fill="none" stroke="#5a5a5a" strokeWidth="2" />
            <path d="m11 11 4 4" stroke="#5a5a5a" strokeWidth="2" />
          </svg>
        </button>
        <button aria-label="Menu" className="mx-[9px] mr-1.5">
          <svg viewBox="0 0 14 12" className="h-3 w-[14px]">
            <path d="M0 1h14M0 6h14M0 11h14" stroke="#5a5a5a" strokeWidth="2" />
          </svg>
        </button>
      </div>
      <div className="flex h-[21px] shrink-0 items-center gap-[3px] pl-[3px] whitespace-nowrap text-[#111]">
        <Icon name="part" />
        1219_head_plateform_south_NS_frame_A.ipt
      </div>
      <div className="bg-[linear-gradient(#9a9a9a_50%,transparent_50%)] bg-[length:1px_2px] bg-[position:8px_0] bg-repeat-y">
        <Row node={{ t: "Model States: [Primary]", icons: ["folder"] }} />
        <Row node={{ t: "Folded Model", icons: ["folded"] }} kind="minus" />
        <ul className="ml-4 bg-[linear-gradient(#9a9a9a_50%,transparent_50%)] bg-[length:1px_2px] bg-[position:8px_0] bg-repeat-y">
          {nodes.map((n) => (
            <li key={n.t}>
              <Row node={n} />
            </li>
          ))}
        </ul>
      </div>
      <div className="flex-1 bg-[#e3e3e3]">
        <div className="opacity-70">
          <Row node={{ t: "Flat Pattern", icons: ["flat"] }} kind="minus" />
          <ul className="ml-4">
            <li>
              <Row node={{ t: "View: [Primary]", icons: ["view"] }} />
            </li>
            <li>
              <Row node={{ t: "End of Flat", icons: ["end"], leaf: true }} />
            </li>
          </ul>
        </div>
      </div>
    </aside>
  );
}

function Scene() {
  return (
    <svg viewBox="251 148 616 518" preserveAspectRatio="xMaxYMin slice" className="h-full w-full" role="img" aria-label="Model view with circular pattern preview">
      <defs>
        <linearGradient id="sky" gradientUnits="userSpaceOnUse" x1="251" y1="148" x2="800" y2="720">
          <stop offset="0" stopColor="#8e9db6" />
          <stop offset=".35" stopColor="#a8b7cb" />
          <stop offset=".7" stopColor="#c5d1e2" />
          <stop offset="1" stopColor="#dbe5f2" />
        </linearGradient>
        <linearGradient id="side" gradientUnits="userSpaceOnUse" x1="700" y1="560" x2="745" y2="640">
          <stop offset="0" stopColor="#2a2a2f" />
          <stop offset="1" stopColor="#3a3c46" />
        </linearGradient>
        <linearGradient id="bendBand" gradientUnits="userSpaceOnUse" x1="700" y1="549" x2="713" y2="571">
          <stop offset="0" stopColor="#4b4b52" />
          <stop offset="1" stopColor="#2a2a2f" />
        </linearGradient>
        <linearGradient id="cone" x1="0" y1="0" x2="0" y2="1">
          <stop offset="0" stopColor="#2a86d0" />
          <stop offset="1" stopColor="#0d4f8f" />
        </linearGradient>
        <filter id="rust" x="0" y="0" width="1" height="1" colorInterpolationFilters="sRGB">
          <feTurbulence type="fractalNoise" baseFrequency=".014 .024" numOctaves="6" seed="11" />
          <feColorMatrix values="0 0 0 0 .43  0 0 0 0 .27  0 0 0 0 .2  4 0 0 0 -1.950" />
        </filter>
        <filter id="pale" x="0" y="0" width="1" height="1" colorInterpolationFilters="sRGB">
          <feTurbulence type="fractalNoise" baseFrequency=".012 .022" numOctaves="6" seed="4" />
          <feColorMatrix values="0 0 0 0 .42  0 0 0 0 .44  0 0 0 0 .5  0 3.500 0 0 -1.700" />
        </filter>
        <filter id="grain" x="0" y="0" width="1" height="1" colorInterpolationFilters="sRGB">
          <feTurbulence type="fractalNoise" baseFrequency=".1 .14" numOctaves="3" seed="8" />
          <feColorMatrix values="0 0 0 0 .14  0 0 0 0 .14  0 0 0 0 .16  0 0 1.600 0 -.65" />
        </filter>
        <clipPath id="topClip">
          <path d="M717 456H862L498 666H352z" />
        </clipPath>
        <clipPath id="sideClip">
          <path d="M862 456h5v210H498z" />
        </clipPath>
      </defs>
      <rect x="-1200" y="-400" width="2067" height="1500" fill="url(#sky)" />
      <path d="M717 456h150v700H-506z" fill="#3a3c44" />
      <g clipPath="url(#topClip)">
        <path d="M352 456h515v210H352z" fill="#4e4f57" />
        <rect x="352" y="456" width="515" height="210" filter="url(#pale)" opacity=".7" />
        <rect x="352" y="456" width="515" height="210" filter="url(#rust)" opacity=".75" />
        <rect x="352" y="456" width="515" height="210" filter="url(#grain)" opacity=".5" />
        <path d="M717 456 352 666" stroke="#3f4147" strokeWidth="9" />
      </g>
      <g clipPath="url(#sideClip)">
        <path d="M498 456h369v210H498z" fill="url(#side)" />
        <rect x="498" y="456" width="369" height="210" filter="url(#pale)" opacity=".3" />
        <rect x="498" y="456" width="369" height="210" filter="url(#rust)" opacity=".5" />
        <path d="M862 456h5v22L540 666H498z" fill="url(#bendBand)" opacity=".85" />
        <rect x="498" y="456" width="369" height="210" filter="url(#grain)" opacity=".5" />
      </g>
      <ellipse cx="803" cy="479" rx="14" ry="8.500" fill="#33302f" />
      <path d="M790 482c3-6 23-6 26 0 1 7-27 7-26 0z" fill="#d3deec" />
      <path d="M789 456C748 433 671 437 644 470c-37 51 58 102 144 60" fill="none" stroke="#4ba5ee" strokeWidth="1.700" />
      <ellipse cx="724.500" cy="526" rx="11" ry="6" fill="#cfdaea" />
      <path d="M710 524c2-11 27-11 29 0-6-4-23-4-29 0z" fill="#2a2c33" />
      <path d="M710 524c2-11 27-11 29 0-4 12-26 12-29 0z" fill="none" stroke="#1691f2" strokeWidth="2.200" strokeDasharray="10 3" />
      <path d="M725 383v283" stroke="#1691f2" strokeWidth="2" strokeDasharray="13 4 4 4" />
      <path d="M725 472v54" stroke="#1378d0" strokeWidth="2" />
      <circle cx="724.500" cy="465.500" r="4" fill="none" stroke="#f0e010" strokeWidth="1.300" />
      <g fill="none" stroke="#10f010" strokeWidth="1.900">
        <ellipse cx="725" cy="480" rx="14.500" ry="8" />
        <ellipse cx="686.500" cy="502" rx="14" ry="8.500" />
        <ellipse cx="763.500" cy="502" rx="14" ry="8.500" />
      </g>
      <path d="m813 515-32 6c0 8 4 15 11 18z" fill="url(#cone)" />
      <path d="M781 521c-1 8 5 17 11 18 3-5-3-17-11-18z" fill="#1c70b8" />
      <path d="m718 533-23 61" stroke="#ed1c24" strokeWidth="4.500" strokeLinecap="round" />
      <text x="597" y="600" fontFamily="'Open Sans', sans-serif" fontSize="13" fill="#ed1c24">
        Parent Feature
      </text>
    </svg>
  );
}

function Arrow({ fill = "#fff", stroke = "#222", bar }: { fill?: string; stroke?: string; bar?: string }) {
  return (
    <svg viewBox="0 0 18 20" aria-hidden="true" className="h-5 w-[18px] shrink-0">
      <path d="M5 1v12.500l3-2.500 2 4.500 2-1-2-4.500h3.500z" fill={fill} stroke={stroke} strokeWidth="1.100" />
      {bar && <path d="M1 17h16v2H1z" fill={bar} />}
    </svg>
  );
}

function Tool({ label, className = "h-6 w-6", tone = "on", children }: { label: string; className?: string; tone?: "on" | "off" | "active"; children: React.ReactNode }) {
  const t =
    tone === "on" ? "border-[#adadad] bg-[#e1e1e1]" : tone === "off" ? "border-[#bfbfbf] bg-[#cccccc]" : "border-[#0078d7] bg-[#e5f1fb]";
  return (
    <button aria-label={label} disabled={tone === "off"} className={`flex shrink-0 items-center justify-center border ${t} ${className}`}>
      {children}
    </button>
  );
}

function Spin({ label, value, off }: { label: string; value: string; off?: boolean }) {
  return (
    <div className={`flex h-5 border ${off ? "w-[65px] border-[#c3c3c3]" : "w-[77px] border-[#7a7a7a]"}`}>
      <input
        aria-label={label}
        defaultValue={value}
        disabled={off}
        className={`min-w-0 flex-1 outline-none ${off ? "border border-[#f0f0f0] bg-[#c6c6c6] pl-[3px] text-[#777]" : "bg-white pl-[5px] text-black"}`}
      />
      <button aria-label={`${label} options`} disabled={off} className={`flex w-[15px] items-center justify-center ${off ? "bg-[#f0f0f0]" : "bg-[#e6e6e6]"}`}>
        <svg viewBox="0 0 6 8" className="h-2 w-1.5" aria-hidden="true">
          <path d="m1 .5 4 3.500-4 3.500" fill="none" stroke={off ? "#999" : "#000"} strokeWidth="1.600" />
        </svg>
      </button>
    </div>
  );
}

function Panel({ title, className = "", inner = "", children }: { title: string; className?: string; inner?: string; children: React.ReactNode }) {
  return (
    <fieldset className={`h-[119px] min-w-0 border border-[#dcdcdc] ${className}`}>
      <legend className="ml-1 h-[14px] px-[3px] leading-[14px]">{title}</legend>
      <div className={inner}>{children}</div>
    </fieldset>
  );
}

function Dialog() {
  return (
    <div
      role="dialog"
      aria-label="Circular Pattern"
      className="absolute top-px left-[255px] w-[300px] border border-[#7d8694] bg-[#f0f0f0] font-['DejaVu_Sans_Condensed','Noto_Sans',sans-serif] text-[11px] text-black shadow-[0_3px_9px_rgba(20,30,50,0.55)]"
    >
      <div className="flex h-[30px] items-center justify-between bg-white pr-[10px] pl-[7px] font-['Open_Sans',sans-serif] text-[12px] text-[#8f8f8f]">
        <span>Circular Pattern : Circular Pattern2</span>
        <button aria-label="Close">
          <svg viewBox="0 0 10 10" className="size-[10px]">
            <path d="m0 0 10 10M10 0 0 10" stroke="#777" />
          </svg>
        </button>
      </div>
      <div className="pt-[13px] pr-1.5 pb-[10px] pl-1">
        <div className="flex items-start">
          <div className="flex h-[66px] w-[39px] flex-col items-center gap-1.5 border border-[#dcdcdc] pt-[5px]">
            <Tool label="Pattern individual features" tone="active">
              <Icon name="featOn" />
            </Tool>
            <Tool label="Pattern solids">
              <Icon name="solidBlue" />
            </Tool>
          </div>
          <div className="ml-7 flex flex-col gap-[7px] pt-1.5">
            <div className="flex items-center gap-1.5">
              <Tool label="Features" className="h-6 w-[25px]">
                <Arrow bar="#1493f5" />
              </Tool>
              <span className="pt-1">Features</span>
            </div>
            <div className="flex items-center">
              <Tool label="Rotation Axis" className="h-6 w-7">
                <Arrow />
              </Tool>
              <Tool label="Axis options" className="-ml-px h-6 w-[13px]">
                <svg viewBox="0 0 10 6" className="h-1.5 w-[10px] shrink-0">
                  <path d="M0 0h10L5 6z" />
                </svg>
              </Tool>
              <Tool label="Flip" className="ml-[5px] h-6 w-6">
                <Icon name="flip" />
              </Tool>
              <span className="ml-2 pb-1">Rotation Axis</span>
            </div>
            <div className="flex items-start gap-1">
              <Tool label="Solids" tone="off" className="h-6 w-[25px]">
                <Arrow fill="#ddd" stroke="#999" bar="#ffff00" />
              </Tool>
              <span className="pt-[2px]">Solids</span>
            </div>
          </div>
        </div>

        <div className="mt-[18px] flex gap-[2px]">
          <Panel title="Placement" className="w-[143px]" inner="pl-[7px]">
            <div className="flex flex-col gap-2 pt-[6px]">
              <div className="flex items-center gap-1">
                <Icon name="count" />
                <Spin label="Occurrence count" value="4 ul" />
              </div>
              <div className="flex items-center gap-1">
                <Icon name="angle" />
                <Spin label="Occurrence angle" value="360 deg" />
              </div>
            </div>
            <div className="mt-[14px] ml-5">
              <Tool label="Midplane" className="h-[26px] w-7">
                <Icon name="mid" />
              </Tool>
            </div>
          </Panel>
          <Panel title="Orientation" className="flex-1" inner="pl-[9px]">
            <p className="pt-[6px] leading-[14px]">Rotational</p>
            <div className="mt-1 flex gap-[3px]">
              <Tool label="Rotational" tone="active">
                <Icon name="rotA" />
              </Tool>
              <Tool label="Fixed">
                <Icon name="rotB" />
              </Tool>
            </div>
            <div className="mt-5 flex items-center gap-1.5">
              <Tool label="Base Point" tone="off">
                <Arrow fill="#bbb" stroke="#999" />
              </Tool>
              Base Point
            </div>
          </Panel>
        </div>

        <Panel title="Boundary" className="mt-[5px]" inner="pt-[5px] pl-[7px]">
          <div className="flex items-start">
            <Tool label="Boundary">
              <Arrow fill="#d88" bar="#0000f0" />
            </Tool>
            <span className="ml-[9px] flex-1 pt-[5px]">Boundary</span>
            <div className="flex items-center pt-[5px] pr-[27px]">
              <Icon name="offset" className="mr-1" />
              <Spin label="Offset" value="0.0 in" off />
              <Tool label="Flip offset" tone="off" className="ml-[3px] h-6 w-6">
                <Icon name="flipGray" />
              </Tool>
            </div>
          </div>
          <div className="mt-[2px] flex gap-[3px] text-[#9b9b9b]">
            <Tool label="Include geometry" tone="off">
              <Icon name="inc1" />
            </Tool>
            <Tool label="Include centroids" tone="off">
              <Icon name="inc2" />
            </Tool>
            <Tool label="Include base points" tone="off">
              <Icon name="inc3" />
            </Tool>
            <p className="-mt-[3px] ml-1 w-24 leading-4 [text-shadow:1px_1px_0_#fff]">Include enclosed geometry</p>
          </div>
          <div className="mt-[7px] flex items-center gap-[9px] text-[#9b9b9b]">
            <Tool label="Occurrence Base Point" tone="off">
              <Arrow fill="#bbb" stroke="#999" bar="#0000f0" />
            </Tool>
            <span className="pt-1 [text-shadow:1px_1px_0_#fff]">Occurrence Base Point</span>
          </div>
        </Panel>

        <div className="mt-[9px] flex items-center pr-1 pl-[5px]">
          <button aria-label="Help" className="mr-auto flex h-[21px] w-[22px] items-center justify-center border border-[#adadad] bg-[#e1e1e1]">
            <Icon name="help" />
          </button>
          <button className="h-[21px] w-[73px] border border-[#adadad] bg-[#e1e1e1]">OK</button>
          <button className="ml-[10px] h-[21px] w-[73px] border border-[#adadad] bg-[#e1e1e1]">Cancel</button>
          <button aria-label="More options" className="ml-[9px] h-[21px] w-6 border border-[#adadad] bg-[#e1e1e1]">
            &gt;&gt;
          </button>
        </div>
      </div>
    </div>
  );
}

export default function App() {
  return (
    <div className="flex h-screen overflow-hidden bg-[#d8d8d8] font-['Open_Sans','Noto_Sans',sans-serif] text-[12px] leading-4">
      <div className="w-[5px] shrink-0 border-r-2 border-[#20242c] bg-black">
        <div className="ml-[2px] h-full w-px bg-[#0a84c8]" />
      </div>
      <div className="flex min-w-0 flex-1 flex-col">
        <QuickAccess />
        <Tabs />
        <Ribbon />
        <main className="relative flex min-h-0 flex-1 border-t border-[#d8d8d8]">
          <Browser />
          <div className="min-w-0 flex-1 overflow-hidden">
            <Scene />
          </div>
          <Dialog />
          <div className="pointer-events-none absolute top-[360px] left-[21px] h-[30px] w-[156px] border-[5px] border-[#ed1c24]" />
          <div className="pointer-events-none absolute top-[43px] left-[312px] h-10 w-[114px] border-[5px] border-[#ed1c24]" />
        </main>
      </div>
    </div>
  );
}
